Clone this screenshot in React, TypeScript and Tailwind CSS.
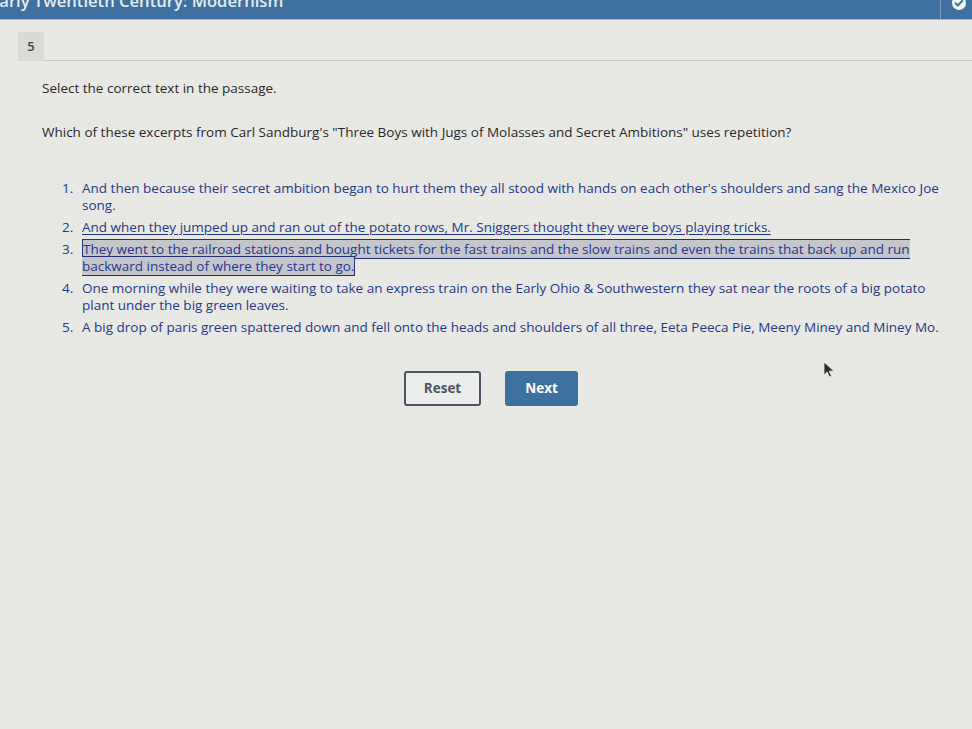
import React from "react";

const items = [
  "And then because their secret ambition began to hurt them they all stood with hands on each other's shoulders and sang the Mexico Joe song.",
  "And when they jumped up and ran out of the potato rows, Mr. Sniggers thought they were boys playing tricks.",
  "They went to the railroad stations and bought tickets for the fast trains and the slow trains and even the trains that back up and run backward instead of where they start to go.",
  "One morning while they were waiting to take an express train on the Early Ohio & Southwestern they sat near the roots of a big potato plant under the big green leaves.",
  "A big drop of paris green spattered down and fell onto the heads and shoulders of all three, Eeta Peeca Pie, Meeny Miney and Miney Mo.",
];

export default function App() {
  return (
    <div
      className="relative min-h-[729px] w-full overflow-hidden bg-[#e8e8e4]"
      style={{ fontFamily: '"Open Sans", "Noto Sans", sans-serif' }}
    >
      {/* top bar */}
      <div className="flex h-[20px] items-start overflow-hidden bg-[#3f71a0] border-b border-[#9fb6cc]">
        <div className="-ml-[10px] -mt-[11px] flex-1 text-[16.6px] font-semibold leading-[24px] text-[#e4ebf2] whitespace-nowrap">
          Early Twentieth Century: Modernism
        </div>
        <div className="flex h-full w-[32px] items-start justify-center border-l border-[#7f9dbd]">
          <svg width="16" height="16" viewBox="0 0 16 16" className="-mt-[5px] ml-[4px]">
            <circle cx="8" cy="8" r="7" fill="#f2f4f6" />
            <path d="M4.6 8.2l2.3 2.3 4.4-4.6" fill="none" stroke="#3f71a0" strokeWidth="2" strokeLinecap="round" strokeLinejoin="round" />
          </svg>
        </div>
      </div>

      {/* question number row */}
      <div className="mt-[12px] flex items-end">
        <div className="ml-[18px] flex h-[29px] w-[26px] items-center justify-center bg-[#dadbd7] text-[13px] font-semibold text-[#444]">
          5
        </div>
        <div className="flex-1 border-b border-[#cbccc8]" />
      </div>

      <div className="pl-[42px] pr-[22px]">
        <p className="mt-[18px] text-[13.5px] leading-[18px] text-[#2a2a2a]">
          Select the correct text in the passage.
        </p>
        <p className="mt-[26px] text-[13.5px] leading-[18px] text-[#2a2a2a]">
          Which of these excerpts from Carl Sandburg's "Three Boys with Jugs of Molasses and Secret Ambitions" uses repetition?
        </p>

        <div className="mt-[39px] flex flex-col gap-[5px] pl-[20px] text-[13.5px] leading-[17px] text-[#27388a]">
          {items.map((t, i) => (
            <div key={i} className="flex">
              <span className="w-[20px] shrink-0">{i + 1}.</span>
              <span className="flex-1">
                {i === 2 ? (
                  <span className="border border-[#243270] bg-[#c4c6cc]">{t}</span>
                ) : i === 1 ? (
                  <span className="underline underline-offset-2">{t}</span>
                ) : (
                  t
                )}
              </span>
            </div>
          ))}
        </div>
      </div>

      {/* buttons */}
      <div className="mt-[35px] flex justify-center gap-[24px] pl-[10px]">
        <button className="h-[35px] w-[77px] rounded-[3px] border-2 border-[#4b5561] bg-[#eceeed] text-[13.5px] font-bold text-[#4b5561]">
          Reset
        </button>
        <button className="h-[35px] w-[73px] rounded-[3px] bg-[#3f71a0] text-[13.5px] font-bold text-white">
          Next
        </button>
      </div>

      {/* mouse pointer */}
      <svg width="14" height="18" viewBox="0 0 14 18" className="absolute left-[823px] top-[361px]">
        <path d="M1 1l0 13 3.2-3 2.3 5 2-1-2.3-4.8 4.6-.2z" fill="#2a2f35" stroke="#e8e8e4" strokeWidth="0.8" />
      </svg>
    </div>
  );
}
